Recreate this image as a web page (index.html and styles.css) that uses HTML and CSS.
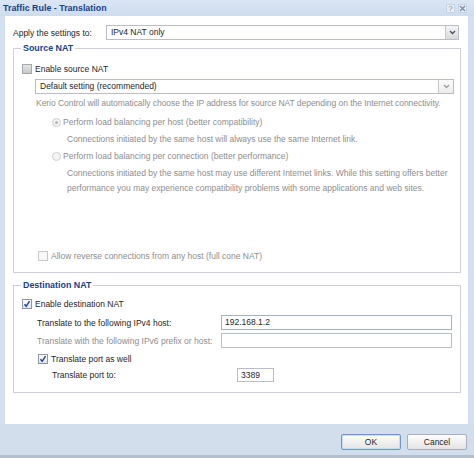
FILE: index.html
```html
<!DOCTYPE html>
<html>
<head>
<meta charset="utf-8">
<link rel="stylesheet" href="styles.css">
</head>
<body>
<div class="win">
  <div class="titlebar">
    <span class="title">Traffic Rule - Translation</span>
    <div class="tools">
      <span class="tool">?</span>
      <span class="tool"><svg width="7" height="7" viewBox="0 0 7 7"><path d="M1 1L6 6M6 1L1 6" stroke="#7d8ea8" stroke-width="1.4"/></svg></span>
    </div>
  </div>
  <div class="panel">
    <div class="apply-row">
      <span class="apply-label">Apply the settings to:</span>
      <div class="combo combo-apply">
        <span class="combo-text">IPv4 NAT only</span>
        <span class="combo-btn"><svg width="7" height="5" viewBox="0 0 7 5"><path d="M1 1L3.5 3.5L6 1" fill="none" stroke="#4a4f58" stroke-width="1.4"/></svg></span>
      </div>
    </div>

    <fieldset class="fs fs-src">
      <legend>Source NAT</legend>
      <div class="chk-row src-chk"><span class="cb"></span><span>Enable source NAT</span></div>
      <div class="combo combo-src">
        <span class="combo-text">Default setting (recommended)</span>
        <span class="combo-btn dim"><svg width="7" height="5" viewBox="0 0 7 5"><path d="M1 1L3.5 3.5L6 1" fill="none" stroke="#9aa0a8" stroke-width="1.4"/></svg></span>
      </div>
      <p class="note dis">Kerio Control will automatically choose the IP address for source NAT depending on the Internet connectivity.</p>
      <div class="radio-row dis r1"><span class="rb on"></span><span>Perform load balancing per host (better compatibility)</span></div>
      <p class="sub dis">Connections initiated by the same host will always use the same Internet link.</p>
      <div class="radio-row dis r2"><span class="rb"></span><span>Perform load balancing per connection (better performance)</span></div>
      <p class="sub two dis">Connections initiated by the same host may use different Internet links. While this setting offers better<br>performance you may experience compatibility problems with some applications and web sites.</p>
      <div class="chk-row reverse dis"><span class="cb cb-dis"></span><span>Allow reverse connections from any host (full cone NAT)</span></div>
    </fieldset>

    <fieldset class="fs fs-dst">
      <legend>Destination NAT</legend>
      <div class="chk-row dst-chk"><span class="cb cb-on"><svg width="8" height="8" viewBox="0 0 8 8"><path d="M1.5 4.2L3.2 6.3L6.6 1.2" fill="none" stroke="#23468f" stroke-width="1.5"/></svg></span><span>Enable destination NAT</span></div>
      <div class="field-row ipv4-row">
        <span class="field-label">Translate to the following IPv4 host:</span>
        <span class="field field-wide field-active">192.168.1.2</span>
      </div>
      <div class="field-row ipv6-row">
        <span class="field-label dis">Translate with the following IPv6 prefix or host:</span>
        <span class="field field-wide"></span>
      </div>
      <div class="chk-row port-chk"><span class="cb cb-on"><svg width="8" height="8" viewBox="0 0 8 8"><path d="M1.5 4.2L3.2 6.3L6.6 1.2" fill="none" stroke="#23468f" stroke-width="1.5"/></svg></span><span>Translate port as well</span></div>
      <div class="field-row port-row">
        <span class="field-label port-label">Translate port to:</span>
        <span class="field field-port">3389</span>
      </div>
    </fieldset>
  </div>
  <div class="footer">
    <button class="btn btn-ok">OK</button>
    <button class="btn">Cancel</button>
  </div>
  <div class="bottom-edge"></div>
</div>
</body>
</html>
```

FILE: styles.css
```css
body {
  margin: 0;
  font-family: "Liberation Sans", Arial, sans-serif;
  font-size: 8.5px;
  color: #262626;
}

.win {
  width: 474px;
  height: 458px;
  background: #d3e0ef;
  display: flex;
  flex-direction: column;
  overflow: hidden;
}

.titlebar {
  height: 16px;
  flex: none;
  display: flex;
  align-items: center;
  justify-content: space-between;
  padding: 0 7px 0 3px;
  background: linear-gradient(#dbe6f4, #cedcee);
}

.title {
  font-weight: bold;
  font-size: 8.9px;
  color: #15428b;
}

.tools {
  display: flex;
  gap: 3px;
}

.tool {
  width: 9px;
  height: 9px;
  box-sizing: border-box;
  border: 1px solid #c5d2e2;
  background: #e6edf6;
  color: #7d8ea8;
  font-size: 8px;
  line-height: 7px;
  text-align: center;
  display: flex;
  align-items: center;
  justify-content: center;
}

.panel {
  flex: none;
  height: 408px;
  margin: 0 6px 0 5px;
  background: #fff;
  box-sizing: border-box;
  padding: 9px 7px 0 8px;
}

.dis {
  color: #8e8e8e;
}

.apply-row {
  display: flex;
  align-items: center;
  height: 15px;
}

.apply-label {
  width: 93px;
  flex: none;
}

.combo {
  display: flex;
  height: 15px;
  box-sizing: border-box;
  border: 1px solid #b9bdc9;
  background: #fff;
}

.combo-apply {
  width: 353px;
}

.combo-text {
  flex: 1;
  padding-left: 4px;
  line-height: 13px;
  color: #262626;
}

.combo-btn {
  width: 12px;
  flex: none;
  background: linear-gradient(#f6f6f6, #d8d8d8);
  border-left: 1px solid #c6c8ce;
  display: flex;
  align-items: center;
  justify-content: center;
}

.combo-btn.dim {
  width: 14px;
  background: linear-gradient(#fbfbfb, #ececec);
}

.fs {
  margin: 0;
  border: 1px solid #cdd0da;
  padding: 0 6px 10px 8px;
  min-width: 0;
}

.fs legend {
  font-weight: bold;
  font-size: 8.9px;
  color: #15428b;
  line-height: 12px;
  padding: 0 2px;
  margin-left: -1px;
}

.fs-src {
  margin-top: 2px;
}

.fs-dst {
  margin-top: 6px;
}

.chk-row {
  display: flex;
  align-items: center;
  gap: 3px;
}

.cb {
  width: 10px;
  height: 10px;
  box-sizing: border-box;
  flex: none;
  border: 1px solid #a3a8b0;
  background: linear-gradient(#e6e6e6, #c8c8c8);
  display: flex;
  align-items: center;
  justify-content: center;
}

.cb-on {
  border-color: #8e97a6;
  background: linear-gradient(#ffffff, #e2e6ec);
}

.cb-dis {
  border-color: #c9c9c9;
  background: #f8f8f8;
}

.src-chk {
  height: 14px;
  margin-top: 8px;
}

.combo-src {
  margin: 3px 0 0 13px;
}

.note {
  margin: 3px 0 0 14px;
  line-height: 12px;
  letter-spacing: -0.04px;
}

.radio-row {
  display: flex;
  align-items: center;
  gap: 2px;
  height: 12px;
  margin-left: 30px;
}

.r1 {
  margin-top: 7px;
}

.r2 {
  margin-top: 5px;
}

.rb {
  width: 9px;
  height: 9px;
  box-sizing: border-box;
  border-radius: 50%;
  border: 1px solid #cfcfcf;
  background: #f4f4f4;
  flex: none;
  display: flex;
  align-items: center;
  justify-content: center;
}

.rb.on::after {
  content: "";
  width: 3px;
  height: 3px;
  border-radius: 50%;
  background: #b3b3b3;
}

.sub {
  margin: 5px 0 0 45px;
  line-height: 12px;
}

.sub.two {
  line-height: 14.5px;
  margin-top: 4px;
}

.reverse {
  margin: 54px 0 0 16px;
  height: 13px;
}

.dst-chk {
  height: 14px;
  margin-top: 6px;
}

.field-row {
  display: flex;
  align-items: center;
}

.ipv4-row {
  margin-top: 4px;
}

.ipv6-row {
  margin-top: 3px;
}

.field-label {
  width: 184px;
  flex: none;
  margin-left: 15px;
}

.port-label {
  width: 185px;
  margin-left: 30px;
}

.field {
  height: 15px;
  box-sizing: border-box;
  border: 1px solid #b9bdc9;
  background: #fff;
  padding-left: 3px;
  line-height: 13px;
  color: #262626;
}

.field-active {
  border-color: #a3b3c6;
}

.field-wide {
  width: 231px;
}

.field-port {
  width: 37px;
  height: 14px;
  line-height: 12px;
}

.port-chk {
  margin: 4px 0 0 16px;
  height: 13px;
}

.port-row {
  margin-top: 3px;
}

.footer {
  flex: none;
  height: 31px;
  box-sizing: border-box;
  display: flex;
  justify-content: flex-end;
  align-items: flex-start;
  gap: 6px;
  padding: 10px 7px 0 0;
  background: #d2deec;
}

.btn {
  width: 60px;
  height: 16px;
  margin: 0;
  padding: 0;
  border: 1px solid #a9afb8;
  border-radius: 2px;
  background: linear-gradient(#fdfdfd, #e4e4e4);
  font: inherit;
  color: #262626;
}

.btn-ok {
  border-color: #7196c8;
  box-shadow: inset 0 0 0 1px #c9dbef;
}

.bottom-edge {
  flex: 1;
  background: #b3bfcd;
}
```
